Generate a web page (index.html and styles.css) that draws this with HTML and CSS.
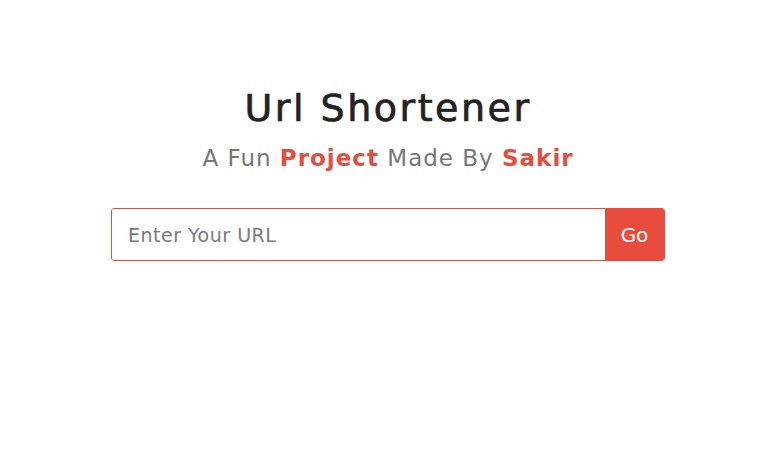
FILE: index.html
```html
<!DOCTYPE html>
<html lang="en">
  <head>
    <meta charset="UTF-8" />
    <meta name="viewport" content="width=device-width, initial-scale=1.0" />
    <title>Url Shortener</title>
    <link rel="stylesheet" href="styles.css">
  </head>
  <body>
    <div class="container">
      <h1>Url Shortener</h1>
      <p class="subtitle">
        A Fun <span class="accent">Project</span> Made By
        <span class="accent">Sakir</span>
      </p>
      <form class="shorten-form" onsubmit="return false;">
        <input type="text" placeholder="Enter Your URL" />
        <button type="submit">Go</button>
      </form>
    </div>
  </body>
</html>
```

FILE: styles.css
```css
/* Global Styles */
body {
  font-family: "DejaVu Sans", sans-serif;
  margin: 0;
  padding: 0 0 0 10px;
  background-color: #ffffff;
  text-align: center;
}

.container {
  width: 554px;
  margin: 0 auto;
  padding-top: 84px;
}

h1 {
  margin: 0;
  font-size: 38px;
  font-weight: 400;
  letter-spacing: 2.5px;
  color: #222;
  line-height: 48px;
  -webkit-text-stroke: 0.7px #222;
}

.subtitle {
  margin: 10px 0 0;
  font-size: 23px;
  letter-spacing: 1px;
  color: #777;
  line-height: 32px;
}

.accent {
  color: #e74c3c;
  font-weight: 700;
}

/* Form Styling */
.shorten-form {
  display: flex;
  margin-top: 34px;
  height: 53px;
  border: 1px solid #e74c3c;
  border-radius: 3px;
  box-sizing: border-box;
  overflow: hidden;
}

.shorten-form input {
  flex: 1;
  border: none;
  outline: none;
  padding: 0 16px;
  font-family: inherit;
  font-size: 19px;
  letter-spacing: 0.5px;
  color: #333;
}

.shorten-form input::placeholder {
  color: #7a7a7a;
}

.shorten-form button {
  width: 59px;
  border: none;
  background-color: #e74c3c;
  color: #fff;
  font-family: inherit;
  font-size: 20px;
  cursor: pointer;
}
```
